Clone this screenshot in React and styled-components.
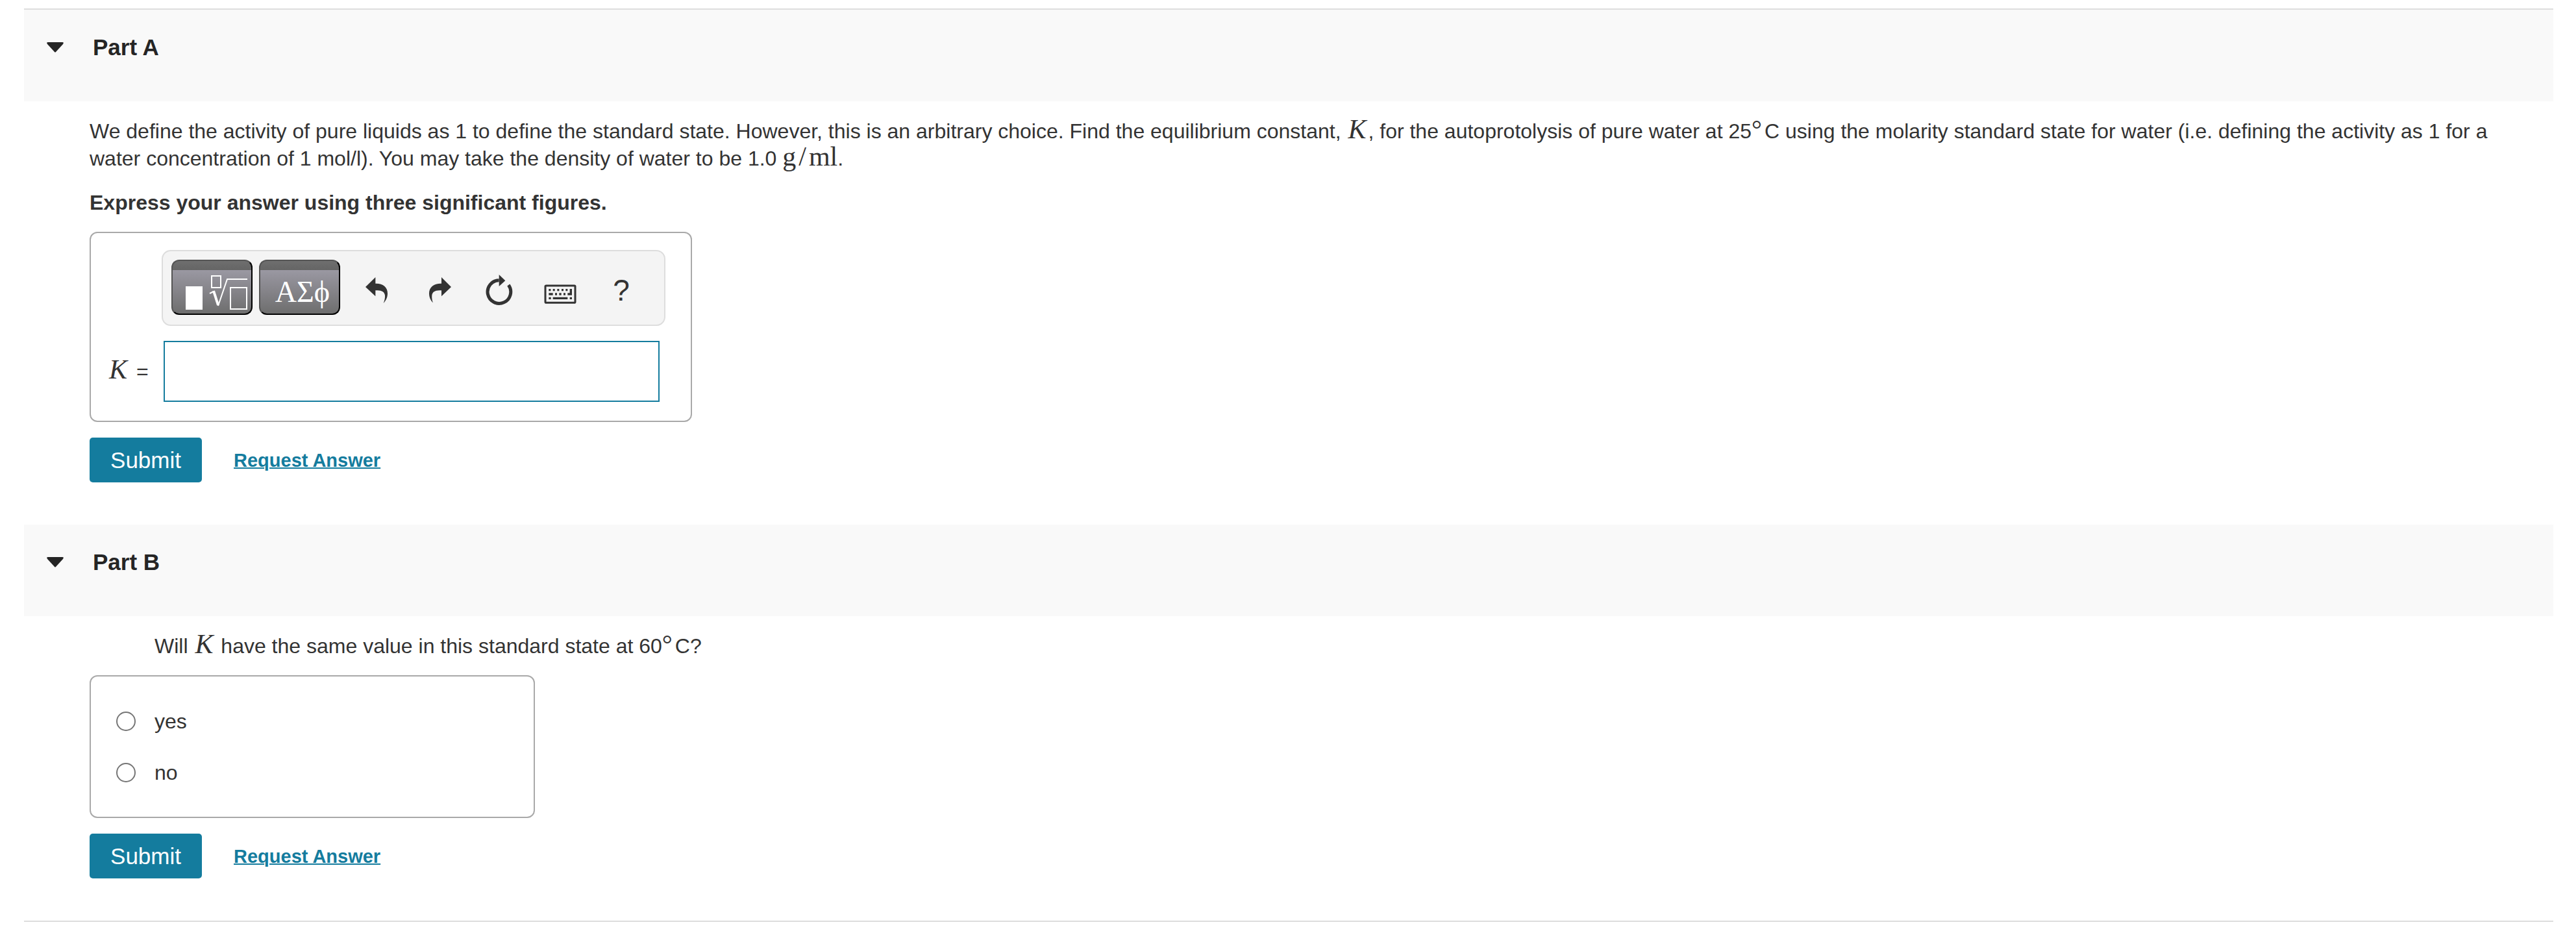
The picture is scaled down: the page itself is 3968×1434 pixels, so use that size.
import React, { useState } from 'react';
import styled, { createGlobalStyle } from 'styled-components';

const UndoIcon = () => (
  <svg width="36" height="40" viewBox="0 0 108 120" fill="currentColor" aria-hidden="true">
    <path d="M46 0 L0 45 L46 88 V61 C72 58 88 66 90 84 C91 96 88 108 83 120 C97 105 102 90 102 74 C102 45 80 28 46 29 Z" />
  </svg>
);

const RedoIcon = () => (
  <svg width="40" height="40" viewBox="-18 0 120 120" fill="currentColor" aria-hidden="true">
    <path d="M57 0 L102 45 L57 88 V61 C30 58 15 66 13 84 C12 96 14 108 18 118 C5 105 0 90 0 74 C0 45 23 28 57 29 Z" />
  </svg>
);

const ResetIcon = () => (
  <svg width="42" height="47" viewBox="0 0 126 141" aria-hidden="true">
    <path d="M62 26 A53.5 53.5 0 1 0 106 48" fill="none" stroke="currentColor" strokeWidth="15" />
    <path d="M62 0 L91 28 L62 54 Z" fill="currentColor" />
  </svg>
);

// The spare space above the frame lets it sit a little lower than the arrows
const KeyboardIcon = () => (
  <svg width="50" height="42" viewBox="0 0 150 126" fill="currentColor" aria-hidden="true">
    <rect x="6" y="42" width="138" height="79" rx="4" fill="none" stroke="currentColor" strokeWidth="9" />
    <path d="M22 57h9v10h-9zM41 57h9v10h-9zM61 57h9v10h-9zM81 57h9v10h-9zM100 57h9v10h-9z" />
    <path d="M119 57h10v29h-20v-10h10z" />
    <path d="M22 76h19v10h-19zM51 76h9v10h-9zM70 76h10v10h-10zM90 76h9v10h-9z" />
    <path d="M22 95h10v10h-10zM41 95h68v10h-68zM119 95h10v10h-10z" />
  </svg>
);

const TemplateIcon = () => (
  <svg width="95" height="60" viewBox="0 0 95 60" fill="none" stroke="#fff" strokeWidth="2" aria-hidden="true">
    <rect x="1" y="19" width="24" height="34" fill="#fff" />
    <rect x="40" y="2" width="14" height="18" />
    <path d="M37 29 L43 26" />
    <path d="M43 25 L50 47" strokeWidth="4" />
    <path d="M50 48 L64 7 H95" strokeWidth="2" />
    <rect x="69" y="20" width="25" height="33" />
  </svg>
);

const Part = ({ title, first, children }) => {
  const [open, setOpen] = useState(true);

  return (
    <PartSection>
      <PartHeader $first={first}>
        <PartToggle type="button" aria-expanded={open} onClick={() => setOpen(!open)}>
          <svg width="26" height="16" viewBox="0 0 26 16" aria-hidden="true">
            <path d="M2 0 H24 Q27 0 25 3 L14 15 Q13 16 12 15 L1 3 Q-1 0 2 0 Z" fill="currentColor" />
          </svg>
          <PartTitle>{title}</PartTitle>
        </PartToggle>
      </PartHeader>
      {open && <PartBody>{children}</PartBody>}
    </PartSection>
  );
};

const Actions = () => (
  <ActionRow>
    <SubmitButton type="submit">Submit</SubmitButton>
    <RequestLink href="#request-answer">Request Answer</RequestLink>
  </ActionRow>
);

const MathToolbar = () => (
  <Toolbar role="toolbar" aria-label="Equation tools">
    <PaletteButton type="button" aria-label="Templates">
      <TemplateIcon />
    </PaletteButton>
    <PaletteButton type="button" aria-label="Symbols" $wide>ΑΣϕ</PaletteButton>
    <ToolGroup>
      <ToolButton type="button" aria-label="Undo"><UndoIcon /></ToolButton>
      <ToolButton type="button" aria-label="Redo"><RedoIcon /></ToolButton>
      <ToolButton type="button" aria-label="Reset"><ResetIcon /></ToolButton>
      <ToolButton type="button" aria-label="Keyboard shortcuts"><KeyboardIcon /></ToolButton>
      <ToolButton type="button" aria-label="Help">?</ToolButton>
    </ToolGroup>
  </Toolbar>
);

const App = () => {
  const [value, setValue] = useState('');
  const [choice, setChoice] = useState(null);

  const handleSubmit = (e) => e.preventDefault();

  return (
    <>
      <GlobalStyle />
      <Page>
        <Part title="Part A" first>
          <form onSubmit={handleSubmit}>
            <Text>
              We define the activity of pure liquids as 1 to define the standard state. However, this is an
              arbitrary choice. Find the equilibrium constant, <Variable>K</Variable>, for the autoprotolysis
              of pure water at 25<Degree>°</Degree>C using the molarity standard state for water (i.e.
              defining the activity as 1 for a water concentration of 1 mol/l). You may take the density of
              water to be 1.0 <Unit>g<Slash>/</Slash>ml</Unit>.
            </Text>
            <Instruction>Express your answer using three significant figures.</Instruction>
            <AnswerPanel>
              <MathToolbar />
              <AnswerRow>
                <AnswerLabel htmlFor="answer-k"><Variable>K</Variable> =</AnswerLabel>
                <AnswerInput
                  id="answer-k"
                  type="text"
                  autoComplete="off"
                  value={value}
                  onChange={(e) => setValue(e.target.value)}
                />
              </AnswerRow>
            </AnswerPanel>
            <Actions />
          </form>
        </Part>

        <Part title="Part B">
          <form onSubmit={handleSubmit}>
            <Question id="question-b">
              Will <Variable>K</Variable> have the same value in this standard state at 60<Degree>°</Degree>C?
            </Question>
            <ChoicePanel role="radiogroup" aria-labelledby="question-b">
              {['yes', 'no'].map((option) => (
                <Choice key={option}>
                  <Radio
                    type="radio"
                    name="part-b"
                    value={option}
                    checked={choice === option}
                    onChange={() => setChoice(option)}
                  />
                  {option}
                </Choice>
              ))}
            </ChoicePanel>
            <Actions />
          </form>
        </Part>
      </Page>
    </>
  );
};

// --- STYLED-COMPONENTS ---

const GlobalStyle = createGlobalStyle`
  *, *::before, *::after {
    box-sizing: border-box;
  }

  body {
    margin: 0;
    background: #fff;
    color: #333;
    font-family: "Liberation Sans", Arial, Helvetica, sans-serif;
    font-size: 32px;
    line-height: 42px;
  }

  button, input {
    font: inherit;
    color: inherit;
  }
`;

const Page = styled.main`
  margin: 13px 35px 13px 37px;
  border-bottom: 2px solid #ddd;
`;

const PartSection = styled.section`
  padding-bottom: 65px;
`;

const PartHeader = styled.header`
  padding: 37px 35px 62px;
  background: #f9f9f9;
  border-top: ${({ $first }) => ($first ? '2px solid #ddd' : 'none')};
`;

const PartToggle = styled.button`
  display: flex;
  align-items: center;
  gap: 45px;
  padding: 0;
  border: none;
  background: none;
  color: #252525;
  cursor: pointer;
`;

const PartTitle = styled.span`
  font-size: 35px;
  font-weight: 700;
`;

const PartBody = styled.div`
  padding: 25px 40px 0 101px;
`;

const Text = styled.p`
  margin: 0;
`;

const Question = styled(Text)`
  padding-left: 100px;
`;

const Instruction = styled.p`
  margin: 26px 0 0;
  font-weight: 700;
`;

// Maths is set in a serif face, with no height of its own so lines stay even
const Variable = styled.i`
  padding: 0 3px 0 2px;
  font-family: "Liberation Serif", "Times New Roman", serif;
  font-size: 42px;
  line-height: 0;
`;

const Unit = styled.span`
  font-family: "Liberation Serif", "Times New Roman", serif;
  font-size: 42px;
  line-height: 0;
`;

const Slash = styled.span`
  padding: 0 4px;
`;

const Degree = styled.span`
  padding-right: 4px;
  font-family: "Liberation Serif", "Times New Roman", serif;
  font-size: 40px;
  line-height: 0;
`;

const Panel = styled.div`
  max-width: 100%;
  margin-top: 24px;
  border: 2px solid #a9a9a9;
  border-radius: 12px;
`;

const AnswerPanel = styled(Panel)`
  width: 928px;
  padding: 26px 39px 29px 26px;
`;

const Toolbar = styled.div`
  display: flex;
  gap: 10px;
  margin-left: 83px;
  padding: 13px 13px 15px;
  background: #f4f4f4;
  border: 2px solid #ddd;
  border-radius: 14px;
`;

const PaletteButton = styled.button`
  display: flex;
  align-items: flex-end;
  justify-content: flex-end;
  width: 125px;
  height: 85px;
  padding: 0 ${({ $wide }) => ($wide ? '14px' : '6px')} 0 0;
  border: 2px solid;
  border-color: #555 #000 #000 #555;
  border-radius: 12px;
  background: linear-gradient(#6e6e6e, #656565 14px, #9a98a2 14px, #6e6e6e);
  color: #fff;
  font-family: "Liberation Serif", "Times New Roman", serif;
  font-size: 46px;
  line-height: 66px;
  cursor: pointer;
`;

const ToolGroup = styled.div`
  display: flex;
`;

const ToolButton = styled.button`
  display: flex;
  align-items: center;
  justify-content: center;
  width: 94px;
  height: 85px;
  padding: 8px 0 0;
  border: none;
  background: none;
  font-size: 46px;
  cursor: pointer;
`;

const AnswerRow = styled.div`
  display: flex;
  align-items: center;
  margin-top: 23px;
`;

const AnswerLabel = styled.label`
  display: flex;
  flex: none;
  gap: 11px;
  align-items: baseline;
  width: 86px;
`;

const AnswerInput = styled.input`
  width: 764px;
  min-width: 0;
  height: 94px;
  padding: 0 16px;
  border: 2px solid #147c9e;
  border-radius: 0;
  background: #fff;
  outline: none;
`;

const ChoicePanel = styled(Panel)`
  width: 686px;
  padding: 29px 39px;
`;

const Choice = styled.label`
  display: flex;
  align-items: center;
  gap: 29px;
  height: 79px;
  cursor: pointer;
`;

const Radio = styled.input`
  appearance: none;
  width: 30px;
  height: 30px;
  margin: 0;
  border: 2px solid #767676;
  border-radius: 50%;
  background: #fff;

  &:checked {
    border-color: #147c9e;
    background: radial-gradient(#147c9e 8px, #fff 9px);
  }
`;

const ActionRow = styled.div`
  display: flex;
  align-items: center;
  gap: 49px;
  margin-top: 24px;
`;

const SubmitButton = styled.button`
  width: 173px;
  height: 69px;
  padding: 0;
  border: none;
  border-radius: 5px;
  background: #147c9e;
  color: #fff;
  font-size: 35px;
  cursor: pointer;

  &:hover {
    background: #0f6683;
  }
`;

const RequestLink = styled.a`
  color: #147c9e;
  font-size: 29px;
  font-weight: 700;
  text-decoration-thickness: 2px;
`;

export default App;
